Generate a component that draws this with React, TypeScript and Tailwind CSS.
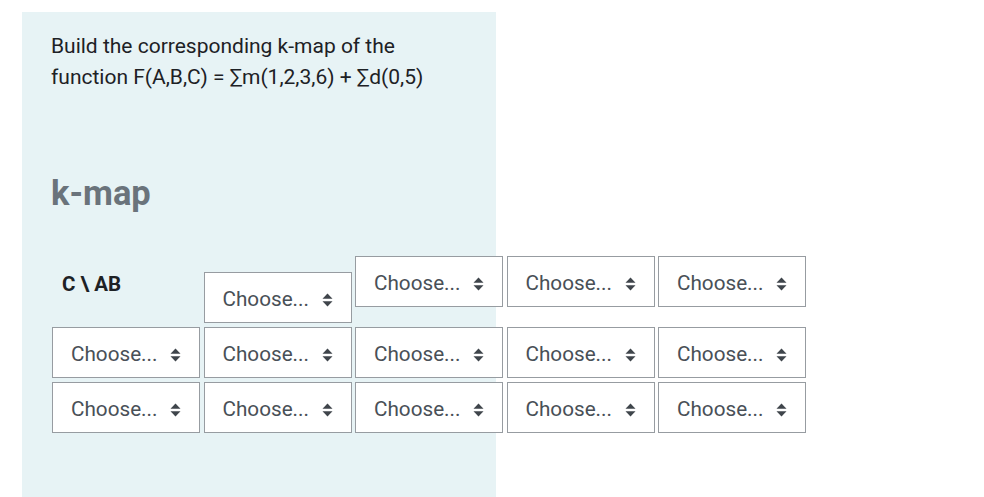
const Arrows = () => (
	<svg width="11" height="14" viewBox="0 0 11 14" className="shrink-0">
		<path d="M5.5 0.5 L10.5 5.7 L0.5 5.7 Z" fill="#3f454b" />
		<path d="M5.5 13.5 L10.5 8.3 L0.5 8.3 Z" fill="#3f454b" />
	</svg>
)

const Choose = ({ className = '' }: { className?: string }) => (
	<div
		className={`flex h-[51px] w-[148px] items-center justify-between border border-[#979ca1] bg-white pt-[4px] pl-[18px] pr-[18px] text-[20.7px] text-[#495057] ${className}`}
	>
		<span>Choose...</span>
		<Arrows />
	</div>
)

export default function App() {
	return (
		<div className="min-h-[497px] bg-white pt-[12px] pl-[22px] font-['Roboto',sans-serif]">
			<div className="min-h-[485px] w-[474px] bg-[#e7f3f5] pt-[19px] pl-[29px]">
				<p className="text-[21px] leading-[31px] text-[#1d2125]">
					Build the corresponding k-map of the
					<br />
					function F(A,B,C) = ∑m(1,2,3,6) + ∑d(0,5)
				</p>
				<h3 className="mt-[81px] text-[34.5px] leading-[38px] font-bold text-[#6a737b]">
					k-map
				</h3>
				<div className="mt-[44px] ml-[1px] flex w-[760px] flex-col gap-y-[4px]">
					<div className="flex items-start gap-x-[3.5px]">
						<div className="w-[148px] pt-[17px] pl-[10px] text-[20.5px] leading-[22px] font-bold text-[#1d2125]">
							C \ AB
						</div>
						<Choose className="mt-[16px]" />
						<Choose />
						<Choose />
						<Choose />
					</div>
					{[0, 1].map((r) => (
						<div key={r} className="flex gap-x-[3.5px]">
							<Choose />
							<Choose />
							<Choose />
							<Choose />
							<Choose />
						</div>
					))}
				</div>
			</div>
		</div>
	)
}
